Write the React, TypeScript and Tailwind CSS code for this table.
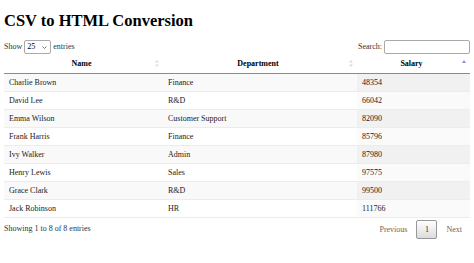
import React from "react";

const rows = [
  { name: "Charlie Brown", dept: "Finance", salary: "48354" },
  { name: "David Lee", dept: "R&D", salary: "66042" },
  { name: "Emma Wilson", dept: "Customer Support", salary: "82090" },
  { name: "Frank Harris", dept: "Finance", salary: "85796" },
  { name: "Ivy Walker", dept: "Admin", salary: "87980" },
  { name: "Henry Lewis", dept: "Sales", salary: "97575" },
  { name: "Grace Clark", dept: "R&D", salary: "99500" },
  { name: "Jack Robinson", dept: "HR", salary: "111766" },
];

const SortBoth = () => (
  <svg width="4" height="7" viewBox="0 0 4 7" className="absolute right-[4px] top-[6px]">
    <path d="M2 0 L4 2.5 L0 2.5 Z" fill="#dcdcdc" />
    <path d="M2 7 L4 4.5 L0 4.5 Z" fill="#dcdcdc" />
  </svg>
);

const SortAsc = () => (
  <svg width="4" height="3" viewBox="0 0 4 3" className="absolute right-[4px] top-[6px]">
    <path d="M2 0 L4 3 L0 3 Z" fill="#8f8fd6" />
  </svg>
);

export default function App() {
  return (
    <div className="w-[474px] h-[263px] bg-white px-[4px] font-['Liberation_Serif',serif] text-[8px] leading-[9.2px] text-[#1a1a1a]">
      <h1 className="pt-[10.5px] pb-[10.5px] text-[16.5px] font-bold leading-[19px] text-black">
        CSV to HTML Conversion
      </h1>

      {/* length + search */}
      <div className="flex h-[14px] items-center justify-between text-[#333]">
        <div className="flex items-center">
          <span>Show</span>
          <div className="mx-[2px] flex h-[14px] w-[27px] items-center justify-between rounded-[2px] border border-[#aaa] bg-white pl-[2px] pr-[3px]">
            <span className="text-black">25</span>
            <svg width="5" height="3" viewBox="0 0 5 3">
              <path d="M0.5 0.5 L2.5 2.5 L4.5 0.5" fill="none" stroke="#555" strokeWidth="0.8" />
            </svg>
          </div>
          <span>entries</span>
        </div>
        <div className="flex items-center">
          <span>Search:</span>
          <div className="ml-[2px] h-[14px] w-[86px] rounded-[2px] border border-[#aaa] bg-white" />
        </div>
      </div>

      <table className="w-full table-fixed border-collapse">
        <colgroup>
          <col className="w-[159px]" />
          <col className="w-[194px]" />
          <col />
        </colgroup>
        <thead>
          <tr className="border-b border-[#8a8a8a]">
            <th className="relative h-[19.5px] pl-[5px] pr-[9px] text-center font-bold text-black">
              Name
              <SortBoth />
            </th>
            <th className="relative h-[19.5px] pl-[5px] pr-[9px] text-center font-bold text-black">
              Department
              <SortBoth />
            </th>
            <th className="relative h-[19.5px] pl-[5px] pr-[9px] text-center font-bold text-black">
              Salary
              <SortAsc />
            </th>
          </tr>
        </thead>
        <tbody>
          {rows.map((r, i) => {
            const odd = i % 2 === 0;
            return (
              <tr
                key={r.name}
                className={`${i > 0 ? "border-t border-[#ececec]" : ""} ${odd ? "bg-[#f9f9f9]" : "bg-white"} ${
                  i === rows.length - 1 ? "border-b border-[#8a8a8a]" : ""
                }`}
              >
                <td className="h-[18px] px-[5px] py-0">{r.name}</td>
                <td className="h-[18px] px-[5px] py-0">{r.dept}</td>
                <td className={`h-[18px] px-[5px] py-0 ${odd ? "bg-[#f1f1f1]" : "bg-[#fafafa]"}`}>
                  {r.salary}
                </td>
              </tr>
            );
          })}
        </tbody>
      </table>

      {/* info + paging */}
      <div className="flex items-start justify-between text-[#333]">
        <div className="pt-[6px]">Showing 1 to 8 of 8 entries</div>
        <div className="flex items-center pt-[2px]">
          <span className="px-[8px] py-[4px] text-[#666]">Previous</span>
          <span className="ml-[1px] min-w-[21px] rounded-[2px] border border-[#979797] bg-gradient-to-b from-white to-[#dcdcdc] px-[7px] py-[4px] text-center text-[#333]">
            1
          </span>
          <span className="ml-[1px] px-[8px] py-[4px] text-[#666]">Next</span>
        </div>
      </div>
    </div>
  );
}
